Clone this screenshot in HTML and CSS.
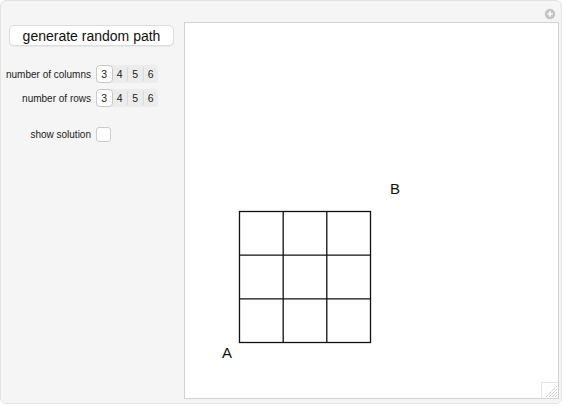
FILE: index.html
```html
<!DOCTYPE html>
<html>
<head>
<meta charset="utf-8">
<link rel="stylesheet" href="styles.css">
</head>
<body>
<div class="app">
  <svg class="plus" width="12" height="12" viewBox="0 0 12 12">
    <circle cx="6" cy="6" r="5.2" fill="#c4c4c4"/>
    <path d="M6 3.3v5.4M3.3 6h5.4" stroke="#fff" stroke-width="1.6"/>
  </svg>
  <div class="controls">
    <button class="gen">generate random path</button>
    <div class="row first">
      <span class="label">number of columns</span>
      <div class="setter">
        <span class="seg sel">3</span><span class="seg">4</span><span class="seg sep">5</span><span class="seg sep">6</span>
      </div>
    </div>
    <div class="row">
      <span class="label">number of rows</span>
      <div class="setter">
        <span class="seg sel">3</span><span class="seg">4</span><span class="seg sep">5</span><span class="seg sep">6</span>
      </div>
    </div>
    <div class="row sol">
      <span class="label">show solution</span>
      <span class="check"></span>
    </div>
  </div>
  <div class="panel">
    <svg class="plot" width="373" height="375" viewBox="0 0 373 375">
      <g stroke="#111" stroke-width="1.3" fill="none">
        <rect x="54.5" y="188.5" width="131" height="131"/>
        <path d="M98.2 188.5v131M141.8 188.5v131M54.5 232.2h131M54.5 275.8h131"/>
      </g>
      <text x="37" y="335" class="pt">A</text>
      <text x="205" y="171" class="pt">B</text>
    </svg>
    <svg class="grip" width="17" height="16" viewBox="0 0 17 16">
      <path d="M0.5 16V0.5H17" stroke="#e4e4e4" fill="none"/>
      <path d="M5 15L16 4M8 15L16 7M11 15L16 10M14 15L16 13" stroke="#9a9a9a" stroke-width="0.8" stroke-dasharray="1 1"/>
    </svg>
  </div>
</div>
</body>
</html>
```
FILE: styles.css
```css
* { box-sizing: border-box; }
html, body { margin: 0; padding: 0; background: #fff; }
body { font-family: "Liberation Sans", Arial, sans-serif; }
.app {
  position: relative;
  width: 562px;
  height: 404px;
  background: #f5f5f5;
  border: 1px solid #e3e3e3;
  border-radius: 6px;
  display: flex;
  padding: 21px 4px 5px 0;
}
.plus { position: absolute; right: 5px; top: 7px; }
.controls {
  width: 183px;
  flex: none;
  padding-top: 3px;
  display: flex;
  flex-direction: column;
}
.gen {
  margin-left: 8px;
  width: 165px;
  height: 21px;
  background: #fff;
  border: 1px solid #dcdcdc;
  border-radius: 5px;
  font-family: "Liberation Sans", Arial, sans-serif;
  font-size: 14px;
  color: #111;
  padding: 0;
  box-shadow: 0 1px 1px rgba(0,0,0,0.05);
}
.row {
  display: flex;
  align-items: center;
  height: 18px;
  margin-top: 6px;
}
.row.first { margin-top: 19px; }
.row.sol { margin-top: 19px; height: 16px; }
.label {
  width: 90px;
  text-align: right;
  font-size: 10px;
  color: #222;
  margin-right: 5px;
}
.setter {
  display: flex;
  width: 62px;
  height: 18px;
  background: #ececec;
  border-radius: 4px;
}
.seg {
  flex: 1;
  display: flex;
  align-items: center;
  justify-content: center;
  font-size: 10.5px;
  color: #222;
  position: relative;
}
.seg.sep { border-left: 1px solid #dadada; margin: 2px 0; }
.seg.sel {
  background: #fff;
  border: 1px solid #c9c9c9;
  border-radius: 4px;
}
.check {
  width: 15px;
  height: 15px;
  background: #fff;
  border: 1px solid #cdcdcd;
  border-radius: 3px;
}
.panel {
  position: relative;
  width: 375px;
  height: 377px;
  flex: none;
  background: #fff;
  border: 1px solid #d2d2d2;
}
.plot { display: block; }
.pt { font-family: "Liberation Sans", Arial, sans-serif; font-size: 15px; fill: #111; }
.grip { position: absolute; right: 0; bottom: 0; }
```
